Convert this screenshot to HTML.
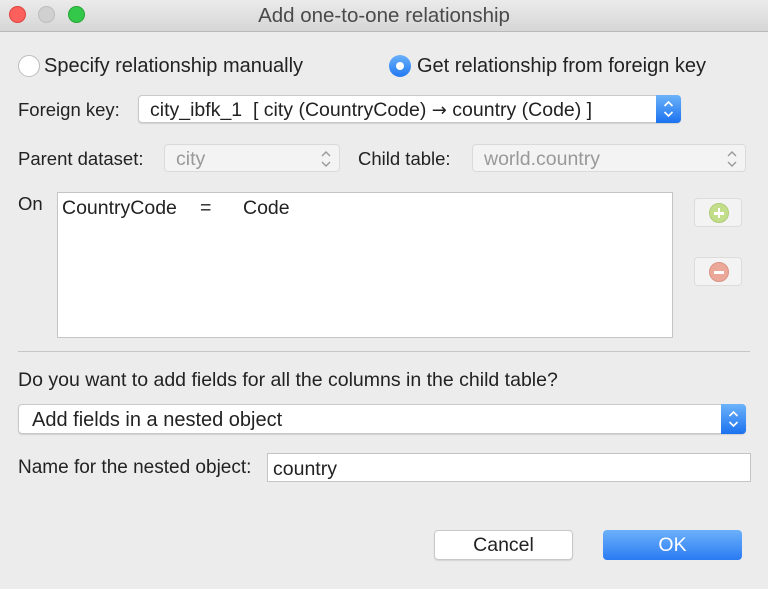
<!DOCTYPE html>
<html><head><style>
*{box-sizing:border-box;margin:0;padding:0}
body{width:768px;height:589px;background:#ececec;font-family:"Liberation Sans",sans-serif;color:#222;position:relative;overflow:hidden}
.a{position:absolute;white-space:nowrap}
.title{left:0;top:0;width:768px;height:32px;background:linear-gradient(#ebebeb,#d6d6d6);border-bottom:1px solid #b8b8b8}
.tl{position:absolute;width:17px;height:17px;border-radius:50%;top:6px}
.sel{background:#fff;border:1px solid #c8c8c8;border-radius:4px;box-shadow:0 1px 1px rgba(0,0,0,.12)}
.dis{background:#f3f3f3;border:1px solid #dadada;border-radius:4px;color:#999}
.blue{position:absolute;right:-1px;top:-1px;bottom:-1px;width:25px;background:linear-gradient(#6cb3fa,#1b72f0);border-radius:0 4px 4px 0}
.btn{background:#fff;border:1px solid #c8c8c8;border-radius:4px;box-shadow:0 1px 1px rgba(0,0,0,.1)}
.small{background:#f3f3f3;border:1px solid #dcdcdc;border-radius:4px}
.lb{font-size:18.5px;line-height:22px}
</style></head><body>
<div class="a title"></div>
<div class="tl" style="left:9px;background:#fc605c;border:1px solid #e0443e"></div>
<div class="tl" style="left:38px;background:#d0d0d0;border:1px solid #bdbdbd"></div>
<div class="tl" style="left:68px;background:#34c84a;border:1px solid #24a534"></div>
<div class="a" style="left:0;width:768px;top:4px;text-align:center;font-size:20.5px;line-height:24px;color:#4a4a4a">Add one-to-one relationship</div>

<div class="a" style="left:18px;top:55px;width:22px;height:22px;border-radius:50%;background:#fff;border:1px solid #bdbdbd"></div>
<div class="a" style="left:44px;top:54px;font-size:20px;line-height:24px">Specify relationship manually</div>
<div class="a" style="left:389px;top:55px;width:22px;height:22px;border-radius:50%;background:linear-gradient(#68b0fa,#2279f2)"><div style="position:absolute;left:7px;top:7px;width:8px;height:8px;border-radius:50%;background:#fff"></div></div>
<div class="a" style="left:417px;top:54px;font-size:20px;line-height:24px">Get relationship from foreign key</div>

<div class="a lb" style="left:18px;top:99px">Foreign key:</div>
<div class="a sel" style="left:138px;top:95px;width:543px;height:28px"><span class="a" style="left:11px;top:2px;font-size:19.5px;line-height:24px">city_ibfk_1&nbsp; [ city (CountryCode) <span style="font-family:'DejaVu Sans',sans-serif;font-size:18px">→</span> country (Code) ]</span><div class="blue"><svg width="25" height="28" viewBox="0 0 25 28"><path d="M8.5 11l4-4 4 4M8.5 17l4 4 4-4" stroke="#fff" stroke-width="1.6" fill="none"/></svg></div></div>

<div class="a lb" style="left:18px;top:148px">Parent dataset:</div>
<div class="a dis" style="left:164px;top:144px;width:176px;height:28px"><span class="a" style="left:11px;top:2px;font-size:19.5px;line-height:24px">city</span><svg class="a" style="right:3px;top:0" width="20" height="28"><path d="M6 11l4-4 4 4M6 17l4 4 4-4" stroke="#999" stroke-width="1.4" fill="none"/></svg></div>
<div class="a lb" style="left:358px;top:148px">Child table:</div>
<div class="a dis" style="left:472px;top:144px;width:274px;height:28px"><span class="a" style="left:11px;top:2px;font-size:19.5px;line-height:24px">world.country</span><svg class="a" style="right:3px;top:0" width="20" height="28"><path d="M6 11l4-4 4 4M6 17l4 4 4-4" stroke="#999" stroke-width="1.4" fill="none"/></svg></div>

<div class="a lb" style="left:18px;top:193px">On</div>
<div class="a" style="left:57px;top:192px;width:616px;height:146px;background:#fff;border:1px solid #c4c4c4">
<span class="a" style="left:4px;top:3px;font-size:19.5px;line-height:24px">CountryCode</span>
<span class="a" style="left:142px;top:3px;font-size:19.5px;line-height:24px">=</span>
<span class="a" style="left:185px;top:3px;font-size:19.5px;line-height:24px">Code</span></div>
<div class="a small" style="left:694px;top:198px;width:48px;height:29px"><div style="position:absolute;left:14px;top:4px;width:20px;height:20px;border-radius:50%;background:#c2de8a;border:1px solid #b0cc78"><div style="position:absolute;left:4px;top:8px;width:10px;height:2.5px;background:#fff"></div><div style="position:absolute;left:7.8px;top:4.2px;width:2.5px;height:10px;background:#fff"></div></div></div>
<div class="a small" style="left:694px;top:257px;width:48px;height:29px"><div style="position:absolute;left:14px;top:4px;width:20px;height:20px;border-radius:50%;background:#eba798;border:1px solid #d89484"><div style="position:absolute;left:4px;top:8px;width:10px;height:2.5px;background:#fff"></div></div></div>

<div class="a" style="left:18px;top:351px;width:732px;height:1px;background:#c6c6c6"></div>
<div class="a" style="left:18px;top:368px;font-size:19.5px;line-height:24px">Do you want to add fields for all the columns in the child table?</div>
<div class="a sel" style="left:18px;top:404px;width:728px;height:30px"><span class="a" style="left:13px;top:3px;font-size:20px;line-height:24px">Add fields in a nested object</span><div class="blue"><svg width="25" height="30" viewBox="0 0 25 30"><path d="M8.5 12l4-4 4 4M8.5 18l4 4 4-4" stroke="#fff" stroke-width="1.6" fill="none"/></svg></div></div>

<div class="a" style="left:18px;top:456px;font-size:19px;line-height:24px">Name for the nested object:</div>
<div class="a" style="left:267px;top:453px;width:484px;height:29px;background:#fff;border:1px solid #c4c4c4"><span class="a" style="left:5px;top:3px;font-size:19.5px;line-height:24px">country</span></div>

<div class="a btn" style="left:434px;top:530px;width:139px;height:30px;text-align:center;font-size:19.5px;line-height:28px">Cancel</div>
<div class="a" style="left:603px;top:530px;width:139px;height:30px;text-align:center;font-size:19.5px;line-height:30px;color:#fff;border-radius:4px;background:linear-gradient(#6cb1fa,#2a7bf3)">OK</div>
</body></html>
